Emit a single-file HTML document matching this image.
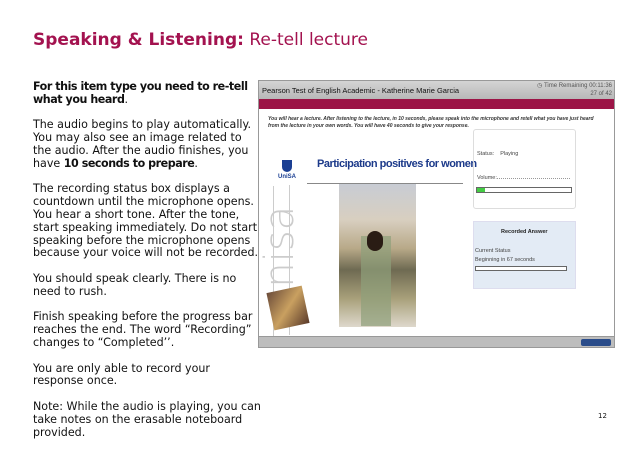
<!DOCTYPE html>
<html><head><meta charset="utf-8"><style>
*{margin:0;padding:0;box-sizing:border-box}
body{width:638px;height:451px;background:#fff;position:relative;overflow:hidden;font-family:"DejaVu Sans","Liberation Sans",sans-serif;color:#111}
.t{position:absolute;left:33px;top:30px;font-size:17px;color:#a3124f;font-family:"DejaVu Sans",sans-serif}
.txt{position:absolute;left:33px;top:81px;width:229px;font-size:11.1px;line-height:12.8px}
.txt p{margin-bottom:12.8px}
.txt b{letter-spacing:-0.45px}
.a{position:absolute}
</style></head><body>
<div class="t"><b>Speaking &amp; Listening:</b> Re-tell lecture</div>
<div class="txt">
<p><b>For this item type you need to re-tell what you heard</b>.</p>
<p>The audio begins to play automatically. You may also see an image related to the audio. After the audio finishes, you have <b>10 seconds to prepare</b>.</p>
<p>The recording status box displays a countdown until the microphone opens. You hear a short tone. After the tone, start speaking immediately. Do not start speaking before the microphone opens because your voice will not be recorded.</p>
<p>You should speak clearly. There is no need to rush.</p>
<p>Finish speaking before the progress bar reaches the end. The word “Recording” changes to “Completed’’.</p>
<p>You are only able to record your response once.</p>
<p>Note: While the audio is playing, you can take notes on the erasable noteboard provided.</p>
</div>
<div class="a" style="left:598px;top:412px;font-size:7px">12</div>
<div class="a" style="left:258px;top:80px;width:357px;height:268px;border:1px solid #999;background:#fff;font-family:'Liberation Sans',sans-serif;overflow:hidden">
 <div class="a" style="left:0;top:0;width:355px;height:18px;background:linear-gradient(#d4d4d4,#b8b8b8)"></div>
 <div class="a" style="left:3px;top:5px;font-size:7.5px;color:#111">Pearson Test of English Academic - Katherine Marie Garcia</div>
 <div class="a" style="right:2px;top:1px;font-size:6px;color:#555;text-align:right;line-height:8px">◷ Time Remaining 00:11:36<br>27 of 42</div>
 <div class="a" style="left:0;top:18px;width:355px;height:10px;background:#9c1446"></div>
 <div class="a" style="left:9px;top:35px;font-size:5px;font-style:italic;font-weight:bold;color:#333;line-height:7px">You will hear a lecture. After listening to the lecture, in 10 seconds, please speak into the microphone and retell what you have just heard<br>from the lecture in your own words. You will have 40 seconds to give your response.</div>
 <div class="a" style="left:23px;top:79px;width:10px;height:12px;background:#1b3f93;border-radius:0 0 5px 5px"></div>
 <div class="a" style="left:19px;top:93px;font-size:6px;color:#1b3f93;font-weight:bold">UniSA</div>
 <div class="a" style="left:14px;top:105px;width:1px;height:155px;background:#ccc"></div>
 <div class="a" style="left:30px;top:104px;width:1px;height:150px;background:#ccc"></div>
 <div class="a" style="left:4px;top:232px;font-size:40px;line-height:34px;color:#ccc;transform:rotate(-90deg);transform-origin:left top;font-family:'DejaVu Sans',sans-serif;font-weight:200">unisa</div>
 <div class="a" style="left:11px;top:208px;width:36px;height:38px;background:linear-gradient(135deg,#6b4c3a,#c9a060 50%,#5a3a2a);transform:rotate(-12deg)"></div>
 <div class="a" style="left:58px;top:77px;font-size:11px;font-weight:bold;color:#1c3a8a;letter-spacing:-.5px">Participation positives for women</div>
 <div class="a" style="left:48px;top:102px;width:156px;height:1px;background:#888"></div>
 <div class="a" style="left:80px;top:103px;width:77px;height:143px;background:linear-gradient(180deg,#c8ccd4 0%,#d8cfc0 25%,#b8a988 45%,#6e6a52 60%,#a8a07a 80%,#ded8cc 100%)"></div>
 <div class="a" style="left:102px;top:155px;width:30px;height:90px;background:#8fa07a;opacity:.7"></div>
 <div class="a" style="left:108px;top:150px;width:16px;height:20px;background:#2a1c14;border-radius:8px"></div>
 <div class="a" style="left:214px;top:48px;width:103px;height:80px;border:1px solid #ddd;border-radius:3px"></div>
 <div class="a" style="left:218px;top:70px;font-size:5.5px;color:#444">Status:&nbsp;&nbsp;&nbsp;&nbsp;Playing</div>
 <div class="a" style="left:218px;top:94px;font-size:5.5px;color:#444">Volume:</div>
 <div class="a" style="left:238px;top:97px;width:73px;height:1px;border-top:1px dotted #999"></div>
 <div class="a" style="left:217px;top:106px;width:96px;height:6px;border:1px solid #666;background:#fff"></div>
 <div class="a" style="left:218px;top:107px;width:8px;height:4px;background:#4c4"></div>
 <div class="a" style="left:214px;top:140px;width:103px;height:68px;background:#e3ebf5;border:1px solid #dde"></div>
 <div class="a" style="left:242px;top:148px;font-size:5.5px;font-weight:bold;color:#222">Recorded Answer</div>
 <div class="a" style="left:216px;top:166px;font-size:5.5px;color:#444;line-height:9px">Current Status<br>Beginning in 67 seconds</div>
 <div class="a" style="left:216px;top:185px;width:92px;height:5px;border:1px solid #666;background:#fff"></div>
 <div class="a" style="left:0;top:255px;width:355px;height:12px;background:#bdbdbd;border-top:1px solid #999"></div>
 <div class="a" style="left:322px;top:258px;width:30px;height:7px;background:#2a4c8a;border-radius:2px"></div>
</div>
</body></html>
